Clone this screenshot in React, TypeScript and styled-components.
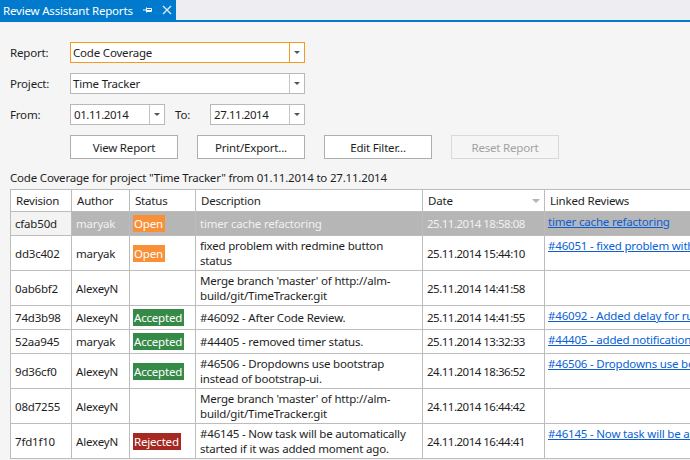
import React from "react";
import styled, { createGlobalStyle } from "styled-components";

const GlobalStyle = createGlobalStyle`
  html, body {
    margin: 0;
    padding: 0;
    width: 690px;
    height: 460px;
    overflow: hidden;
    background: #f5f5f5;
  }
  body {
    font-family: "Noto Sans", "Open Sans", sans-serif;
    font-size: 11.5px;
    letter-spacing: -0.19px;
    color: #1e1e1e;
  }
`;

const Window = styled.div`
  width: 690px;
  height: 460px;
  overflow: hidden;
  display: flex;
  flex-direction: column;
  > * {
    flex: none;
  }
`;

const TabStrip = styled.div`
  height: 20px;
  background: #eeeef2;
  border-bottom: 2px solid #007acc;
  display: flex;
`;

const Tab = styled.div`
  width: 176px;
  height: 20px;
  padding-left: 3px;
  box-sizing: border-box;
  background: #007acc;
  color: #fff;
  display: flex;
  align-items: center;
`;

const TabTitle = styled.span`
  width: 140px;
  white-space: nowrap;
`;

const PinIcon = styled.svg`
  width: 9px;
  height: 10px;
  margin-right: 10px;
  flex: none;
`;

const CloseIcon = styled.svg`
  width: 10px;
  height: 10px;
  flex: none;
`;

const Form = styled.div`
  padding: 20px 0 0 10px;
  display: grid;
  grid-template-columns: 60px 95px 45px 95px;
  grid-auto-rows: 21px;
  row-gap: 10px;
  align-items: center;
`;

const FieldLabel = styled.label<{ $inset?: number }>`
  padding-left: ${({ $inset }) => $inset ?? 0}px;
`;

const Combo = styled.div<{ $wide?: boolean; $focused?: boolean }>`
  grid-column: ${({ $wide }) => ($wide ? "2 / span 3" : "auto")};
  height: 21px;
  box-sizing: border-box;
  background: #fff;
  border: 1px solid ${({ $focused }) => ($focused ? "#f39a1f" : "#b9b9b9")};
  display: flex;
  align-items: center;
`;

const ComboValue = styled.span<{ $date?: boolean }>`
  flex: 1;
  padding-left: ${({ $date }) => ($date ? 3 : 2)}px;
  letter-spacing: ${({ $date }) => ($date ? -0.45 : -0.19)}px;
  white-space: nowrap;
`;

const ComboArrow = styled.span<{ $focused?: boolean }>`
  width: 14px;
  height: 19px;
  flex: none;
  border-left: 1px solid ${({ $focused }) => ($focused ? "#f39a1f" : "#c4c4c4")};
  display: flex;
  align-items: center;
  justify-content: center;
  &::after {
    content: "";
    border-left: 3px solid transparent;
    border-right: 3px solid transparent;
    border-top: 3px solid #555;
  }
`;

const ButtonRow = styled.div`
  padding: 10px 0 0 70px;
  display: flex;
  gap: 19px;
`;

const ActionButton = styled.button`
  width: 108px;
  height: 24px;
  padding: 0;
  box-sizing: border-box;
  background: #fff;
  border: 1px solid #aeaeae;
  border-radius: 0;
  font: inherit;
  letter-spacing: inherit;
  color: #1e1e1e;
  &:disabled {
    background: #f5f5f5;
    border-color: #d9d9d9;
    color: #a2a2a2;
  }
`;

const ReportTitle = styled.div`
  height: 30px;
  padding: 0 0 4px 10px;
  box-sizing: border-box;
  display: flex;
  align-items: flex-end;
  white-space: nowrap;
`;

const Table = styled.table`
  margin-left: 10px;
  width: 700px;
  table-layout: fixed;
  border-collapse: collapse;
  background: #fff;
`;

const Row = styled.tr<{ $tall?: boolean; $selected?: boolean }>`
  height: ${({ $tall }) => ($tall ? 35 : 24)}px;
  background: ${({ $selected }) => ($selected ? "#b6b6b6" : "#fff")};
  color: ${({ $selected }) => ($selected ? "#f1f1f1" : "inherit")};
`;

const HeaderRow = styled.tr`
  height: 22px;
`;

const HeaderCell = styled.th`
  position: relative;
  padding: 0 0 0 5px;
  border: 1px solid #bcbcbc;
  text-align: left;
  font-weight: normal;
  white-space: nowrap;
`;

const SortArrow = styled.span`
  position: absolute;
  right: 4px;
  top: 9px;
  border-left: 4px solid transparent;
  border-right: 4px solid transparent;
  border-top: 4px solid #b4b4b4;
`;

const Cell = styled.td`
  padding: 0 0 0 5px;
  border: 1px solid #bcbcbc;
  line-height: 15px;
  vertical-align: middle;
  overflow: hidden;
  white-space: nowrap;
`;

const RevisionCell = styled(Cell)<{ $selected?: boolean }>`
  padding-left: 4px;
  color: #1e1e1e;
  background: ${({ $selected }) => ($selected ? "#f3f3f3" : "#fff")};
`;

const AuthorCell = styled(Cell)`
  padding-left: 4px;
`;

const StatusCell = styled(Cell)`
  padding-left: 3px;
`;

const DescriptionCell = styled(Cell)`
  padding: 0 8px 0 4px;
  white-space: normal;
`;

const DateCell = styled(Cell)`
  padding-left: 4px;
  letter-spacing: -0.5px;
`;

const LinkCell = styled(Cell)`
  padding: 2px 0 0 3px;
  vertical-align: top;
`;

const ReviewLink = styled.a`
  color: #0a5fd6;
  text-decoration: underline;
`;

const statusColors: Record<string, string> = {
  Open: "#f98f36",
  Accepted: "#368a47",
  Rejected: "#a52821",
};

const Badge = styled.span<{ $status: string }>`
  display: inline-block;
  height: 17px;
  line-height: 17px;
  padding: 0 2px 0 1px;
  color: #fff;
  vertical-align: middle;
  background: ${({ $status }) => statusColors[$status]};
`;

interface Commit {
  revision: string;
  author: string;
  status?: string;
  description: string;
  date: string;
  link?: string;
  tall?: boolean;
  selected?: boolean;
}

const commits: Commit[] = [
  { revision: "cfab50d", author: "maryak", status: "Open", description: "timer cache refactoring", date: "25.11.2014 18:58:08", link: "timer cache refactoring", selected: true },
  { revision: "dd3c402", author: "maryak", status: "Open", description: "fixed problem with redmine button status", date: "25.11.2014 15:44:10", link: "#46051 - fixed problem with redmine", tall: true },
  { revision: "0ab6bf2", author: "AlexeyN", description: "Merge branch 'master' of http://alm-build/git/TimeTracker.git", date: "25.11.2014 14:41:58", tall: true },
  { revision: "74d3b98", author: "AlexeyN", status: "Accepted", description: "#46092 - After Code Review.", date: "25.11.2014 14:41:55", link: "#46092 - Added delay for rules" },
  { revision: "52aa945", author: "maryak", status: "Accepted", description: "#44405 - removed timer status.", date: "25.11.2014 13:32:33", link: "#44405 - added notifications" },
  { revision: "9d36cf0", author: "AlexeyN", status: "Accepted", description: "#46506 - Dropdowns use bootstrap instead of bootstrap-ui.", date: "24.11.2014 18:36:52", link: "#46506 - Dropdowns use bootstrap", tall: true },
  { revision: "08d7255", author: "AlexeyN", description: "Merge branch 'master' of http://alm-build/git/TimeTracker.git", date: "24.11.2014 16:44:42", tall: true },
  { revision: "7fd1f10", author: "AlexeyN", status: "Rejected", description: "#46145 - Now task will be automatically started if it was added moment ago.", date: "24.11.2014 16:44:41", link: "#46145 - Now task will be automatically", tall: true },
];

const buttons = ["View Report", "Print/Export...", "Edit Filter..."];

const App: React.FC = () => (
  <Window>
    <GlobalStyle />
    <TabStrip>
      <Tab>
        <TabTitle>Review Assistant Reports</TabTitle>
        <PinIcon viewBox="0 0 9 10">
          <path d="M0 5h3M3.5 2.5v5M3.5 3.5h5v3h-5M3.5 5.5h5" stroke="#fff" strokeWidth="1" fill="none" />
        </PinIcon>
        <CloseIcon viewBox="0 0 10 10">
          <path d="M1 1l8 8M9 1l-8 8" stroke="#d6ebf8" strokeWidth="1.4" fill="none" />
        </CloseIcon>
      </Tab>
    </TabStrip>
    <Form>
      <FieldLabel>Report:</FieldLabel>
      <Combo $wide $focused>
        <ComboValue>Code Coverage</ComboValue>
        <ComboArrow $focused />
      </Combo>
      <FieldLabel>Project:</FieldLabel>
      <Combo $wide>
        <ComboValue>Time Tracker</ComboValue>
        <ComboArrow />
      </Combo>
      <FieldLabel>From:</FieldLabel>
      <Combo>
        <ComboValue $date>01.11.2014</ComboValue>
        <ComboArrow />
      </Combo>
      <FieldLabel $inset={10}>To:</FieldLabel>
      <Combo>
        <ComboValue $date>27.11.2014</ComboValue>
        <ComboArrow />
      </Combo>
    </Form>
    <ButtonRow>
      {buttons.map((label) => (
        <ActionButton key={label}>{label}</ActionButton>
      ))}
      <ActionButton disabled>Reset Report</ActionButton>
    </ButtonRow>
    <ReportTitle>Code Coverage for project "Time Tracker" from 01.11.2014 to 27.11.2014</ReportTitle>
    <Table>
      <colgroup>
        <col width="61" />
        <col width="58" />
        <col width="66" />
        <col width="227" />
        <col width="122" />
        <col width="166" />
      </colgroup>
      <thead>
        <HeaderRow>
          <HeaderCell>Revision</HeaderCell>
          <HeaderCell>Author</HeaderCell>
          <HeaderCell>Status</HeaderCell>
          <HeaderCell>Description</HeaderCell>
          <HeaderCell>
            Date
            <SortArrow />
          </HeaderCell>
          <HeaderCell>Linked Reviews</HeaderCell>
        </HeaderRow>
      </thead>
      <tbody>
        {commits.map((commit) => (
          <Row key={commit.revision} $tall={commit.tall} $selected={commit.selected}>
            <RevisionCell $selected={commit.selected}>{commit.revision}</RevisionCell>
            <AuthorCell>{commit.author}</AuthorCell>
            <StatusCell>{commit.status ? <Badge $status={commit.status}>{commit.status}</Badge> : null}</StatusCell>
            <DescriptionCell>{commit.description}</DescriptionCell>
            <DateCell>{commit.date}</DateCell>
            <LinkCell>{commit.link ? <ReviewLink href="#">{commit.link}</ReviewLink> : null}</LinkCell>
          </Row>
        ))}
      </tbody>
    </Table>
  </Window>
);

export default App;
